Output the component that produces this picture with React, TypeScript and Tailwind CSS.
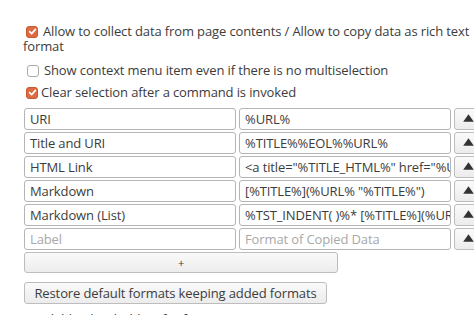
import React from "react";

const font = { fontFamily: "'Open Sans', 'Noto Sans', sans-serif" };

function Check({ checked }: { checked: boolean }) {
  if (checked) {
    return (
      <span className="inline-flex shrink-0 items-center justify-center w-[12px] h-[12px] rounded-[3px] bg-[#dd6b43] border border-[#c8582f] align-[-1px] mr-[5px]">
        <svg width="9" height="9" viewBox="0 0 10 10">
          <path d="M1.8 5.2 L4 7.4 L8.3 2.6" stroke="white" strokeWidth="1.8" fill="none" strokeLinecap="round" strokeLinejoin="round" />
        </svg>
      </span>
    );
  }
  return (
    <span className="inline-block shrink-0 w-[12px] h-[12px] rounded-[3px] bg-white border border-[#a9a9a9] align-[-1px] mr-[5px]" />
  );
}

const rows = [
  ["URI", "%URL%"],
  ["Title and URI", "%TITLE%%EOL%%URL%"],
  ["HTML Link", "<a title=\"%TITLE_HTML%\" href=\"%URL_HTML%\">%TITLE_HTML%</a>"],
  ["Markdown", "[%TITLE%](%URL% \"%TITLE%\")"],
  ["Markdown (List)", "%TST_INDENT( )%* [%TITLE%](%URL% \"%TITLE%\")"],
];

function Field({ value, placeholder, w }: { value?: string; placeholder?: string; w: string }) {
  return (
    <div className={`${w} h-[22px] shrink-0 rounded-[3px] border border-[#b5b5b5] bg-white px-[5px] flex items-center overflow-hidden whitespace-nowrap`}>
      {value ? (
        <span className="text-[#3c3c3c]">{value}</span>
      ) : (
        <span className="text-[#a8a8a8]">{placeholder}</span>
      )}
    </div>
  );
}

function Arrow() {
  return (
    <div className="w-[30px] h-[22px] shrink-0 rounded-[3px] border border-[#bdbdbd] bg-gradient-to-b from-[#fafafa] to-[#ececec] flex items-center pl-[8px] pb-[2px]">
      <svg width="11" height="8" viewBox="0 0 11 8">
        <path d="M5.5 0.3 L10.8 7.8 L0.2 7.8 Z" fill="#333333" />
      </svg>
    </div>
  );
}

export default function App() {
  return (
    <div className="w-[474px] h-[315px] overflow-hidden bg-white text-[13px] tracking-[-0.12px] text-[#3c3c3c] leading-[15px]" style={font}>
      <div className="pl-[23px] pt-[24px] w-[600px]">
        <div className="pl-[3px] whitespace-nowrap flex items-center h-[15px]">
          <Check checked />
          <span>Allow to collect data from page contents / Allow to copy data as rich text</span>
        </div>
        <div>format</div>
        <div className="mt-[9px] pl-[4px] h-[15px] flex items-center">
          <Check checked={false} />
          <span>Show context menu item even if there is no multiselection</span>
        </div>
        <div className="mt-[7px] pl-[3px] h-[15px] flex items-center">
          <Check checked />
          <span className="-ml-[2px]">Clear selection after a command is invoked</span>
        </div>
        <div className="mt-[8px] flex flex-col gap-[2px] pl-[1px]">
          {rows.map(([a, b]) => (
            <div key={a} className="flex gap-[3px]">
              <Field value={a} w="w-[212px]" />
              <Field value={b} w="w-[212px]" />
              <Arrow />
            </div>
          ))}
          <div className="flex gap-[3px]">
            <Field placeholder="Label" w="w-[212px]" />
            <Field placeholder="Format of Copied Data" w="w-[212px]" />
            <Arrow />
          </div>
          <div className="w-[314px] h-[21px] rounded-[3px] border border-[#bdbdbd] bg-gradient-to-b from-[#fafafa] to-[#ececec] flex items-center justify-center text-[11px]">
            +
          </div>
        </div>
        <div className="mt-[9px] pl-[1px]">
          <div className="w-[303px] h-[22px] rounded-[3px] border border-[#bdbdbd] bg-gradient-to-b from-[#fafafa] to-[#ececec] flex items-center justify-center whitespace-nowrap">
            Restore default formats keeping added formats
          </div>
        </div>
        <div className="mt-[8px] pl-[3px] whitespace-nowrap">Available placeholders for formats:</div>
      </div>
    </div>
  );
}
